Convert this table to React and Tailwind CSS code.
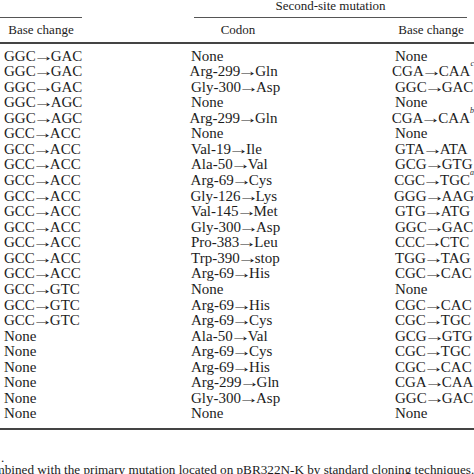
import React from "react";

const rows = [
  ["GGC→GAC", "None", "None"],
  ["GGC→GAC", "Arg-299→Gln", "CGA→CAA", "c"],
  ["GGC→GAC", "Gly-300→Asp", "GGC→GAC"],
  ["GGC→AGC", "None", "None"],
  ["GGC→AGC", "Arg-299→Gln", "CGA→CAA", "b"],
  ["GCC→ACC", "None", "None"],
  ["GCC→ACC", "Val-19→Ile", "GTA→ATA"],
  ["GCC→ACC", "Ala-50→Val", "GCG→GTG"],
  ["GCC→ACC", "Arg-69→Cys", "CGC→TGC", "a"],
  ["GCC→ACC", "Gly-126→Lys", "GGG→AAG"],
  ["GCC→ACC", "Val-145→Met", "GTG→ATG"],
  ["GCC→ACC", "Gly-300→Asp", "GGC→GAC"],
  ["GCC→ACC", "Pro-383→Leu", "CCC→CTC"],
  ["GCC→ACC", "Trp-390→stop", "TGG→TAG"],
  ["GCC→ACC", "Arg-69→His", "CGC→CAC"],
  ["GCC→GTC", "None", "None"],
  ["GCC→GTC", "Arg-69→His", "CGC→CAC"],
  ["GCC→GTC", "Arg-69→Cys", "CGC→TGC"],
  ["None", "Ala-50→Val", "GCG→GTG"],
  ["None", "Arg-69→Cys", "CGC→TGC"],
  ["None", "Arg-69→His", "CGC→CAC"],
  ["None", "Arg-299→Gln", "CGA→CAA"],
  ["None", "Gly-300→Asp", "GGC→GAC"],
  ["None", "None", "None"],
];

// the arrow glyph in Liberation Serif is short, stretch it a bit
function Cell({ text }) {
  const parts = text.split("→");
  if (parts.length < 2) return text;
  return (
    <>
      {parts[0]}
      <span className="inline-block scale-x-[1.4] origin-center">→</span>
      {parts[1]}
    </>
  );
}

export default function App() {
  return (
    <div className="w-[474px] h-[474px] overflow-hidden bg-white text-[#1c1c1c] font-['Liberation_Serif','Times_New_Roman',serif]">
      {/* spanning header */}
      <div className="flex h-[17px]">
        <div className="w-[194px]" />
        <div className="w-[273px] text-center text-[13px] leading-[12px]">
          Second-site mutation
        </div>
      </div>
      <div className="flex h-px">
        <div className="w-[82px] bg-[#555]" />
        <div className="w-[112px]" />
        <div className="w-[273px] bg-[#555]" />
      </div>

      {/* column headers */}
      <div className="flex h-[24px] items-center text-[13px]">
        <div className="w-[82px] text-center">Base change</div>
        <div className="w-[112px]" />
        <div className="w-[88px] text-center">Codon</div>
        <div className="w-[113px]" />
        <div className="w-[72px] text-center">Base change</div>
      </div>
      <div className="h-[2px] bg-[#444]" />

      {/* body */}
      <div className="pt-[4px] text-[15px]">
        {rows.map((r, i) => (
          <div key={i} className="flex h-[15.57px] items-center whitespace-nowrap">
            <div className="w-[191px] pl-[4px]">
              <Cell text={r[0]} />
            </div>
            <div className="w-[200px]">
              <Cell text={r[1]} />
            </div>
            <div className="flex-1 pl-[4px]">
              <Cell text={r[2]} />
              {r[3] && (
                <sup className="text-[8px] italic align-super">{r[3]}</sup>
              )}
            </div>
          </div>
        ))}
      </div>
      <div className="mt-[6px] h-[2px] bg-[#444]" />

      {/* footnotes */}
      <div className="mt-[23px] h-[10px] text-[13px] leading-[10px] pl-px">.</div>
      <div className="text-[13.2px] leading-[14px] whitespace-nowrap -ml-[18px]">
        combined with the primary mutation located on pBR322N-K by standard cloning techniques.
      </div>
    </div>
  );
}
